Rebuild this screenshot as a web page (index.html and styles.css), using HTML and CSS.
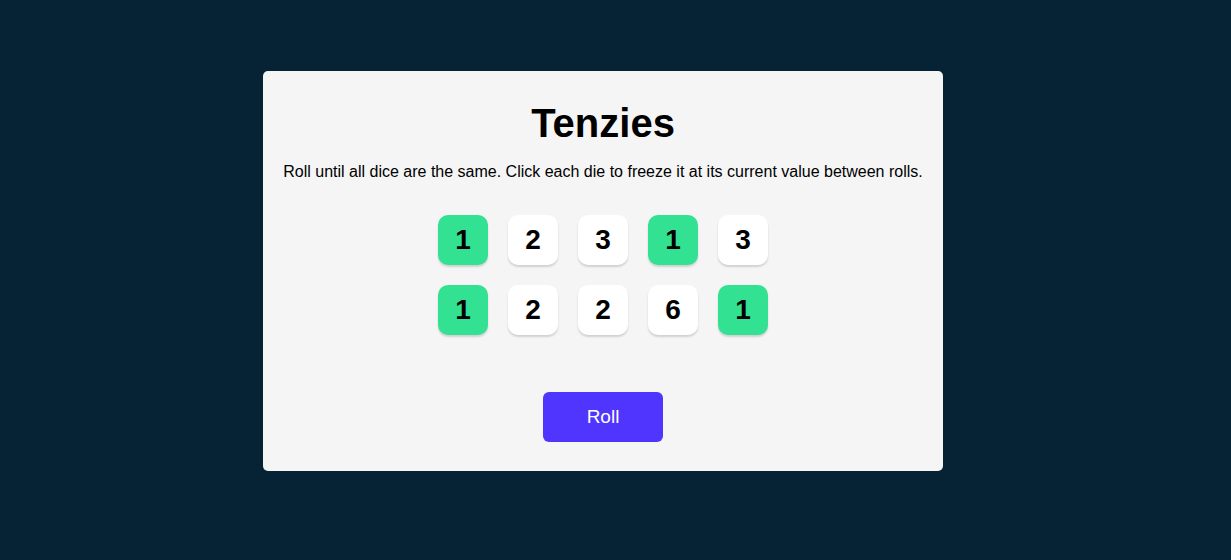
FILE: index.html
```html
<!DOCTYPE html>
<html>
<head>
<meta charset="utf-8">
<link rel="stylesheet" href="styles.css">
</head>
<body>
<main class="card">
  <h1 class="title">Tenzies</h1>
  <p class="instructions">Roll until all dice are the same. Click each die to freeze it at its current value between rolls.</p>
  <div class="dice">
    <button class="die held">1</button>
    <button class="die">2</button>
    <button class="die">3</button>
    <button class="die held">1</button>
    <button class="die">3</button>
    <button class="die held">1</button>
    <button class="die">2</button>
    <button class="die">2</button>
    <button class="die">6</button>
    <button class="die held">1</button>
  </div>
  <button class="roll">Roll</button>
</main>
</body>
</html>
```
FILE: styles.css
```css
html, body {
  margin: 0;
  padding: 0;
}
body {
  background: #062335;
  height: 560px;
  font-family: "Liberation Sans", Arial, sans-serif;
  overflow: hidden;
}
.card {
  box-sizing: border-box;
  width: 680px;
  height: 400px;
  margin: 71px 0 0 263px;
  background: #f5f5f5;
  border-radius: 5px;
  display: flex;
  flex-direction: column;
  align-items: center;
  padding-top: 29px;
}
.title {
  margin: 0;
  font-size: 40px;
  line-height: 46px;
  font-weight: 700;
  color: #000;
}
.instructions {
  margin: 17px 0 0;
  font-size: 16px;
  line-height: 18px;
  color: #000;
}
.dice {
  margin-top: 34px;
  display: grid;
  grid-template-columns: repeat(5, 50px);
  grid-auto-rows: 50px;
  gap: 20px;
}
.die {
  border: none;
  margin: 0;
  padding: 0;
  width: 50px;
  height: 50px;
  border-radius: 10px;
  background: #ffffff;
  box-shadow: 0 2px 2px rgba(0, 0, 0, 0.15);
  font-family: "Liberation Sans", Arial, sans-serif;
  font-size: 28px;
  font-weight: 700;
  color: #000;
  display: flex;
  align-items: center;
  justify-content: center;
}
.die.held {
  background: #32e192;
}
.roll {
  margin-top: 57px;
  width: 120px;
  height: 50px;
  border: none;
  border-radius: 6px;
  background: #5035ff;
  color: #fff;
  font-family: "Liberation Sans", Arial, sans-serif;
  font-size: 19px;
  padding: 0;
}
```
